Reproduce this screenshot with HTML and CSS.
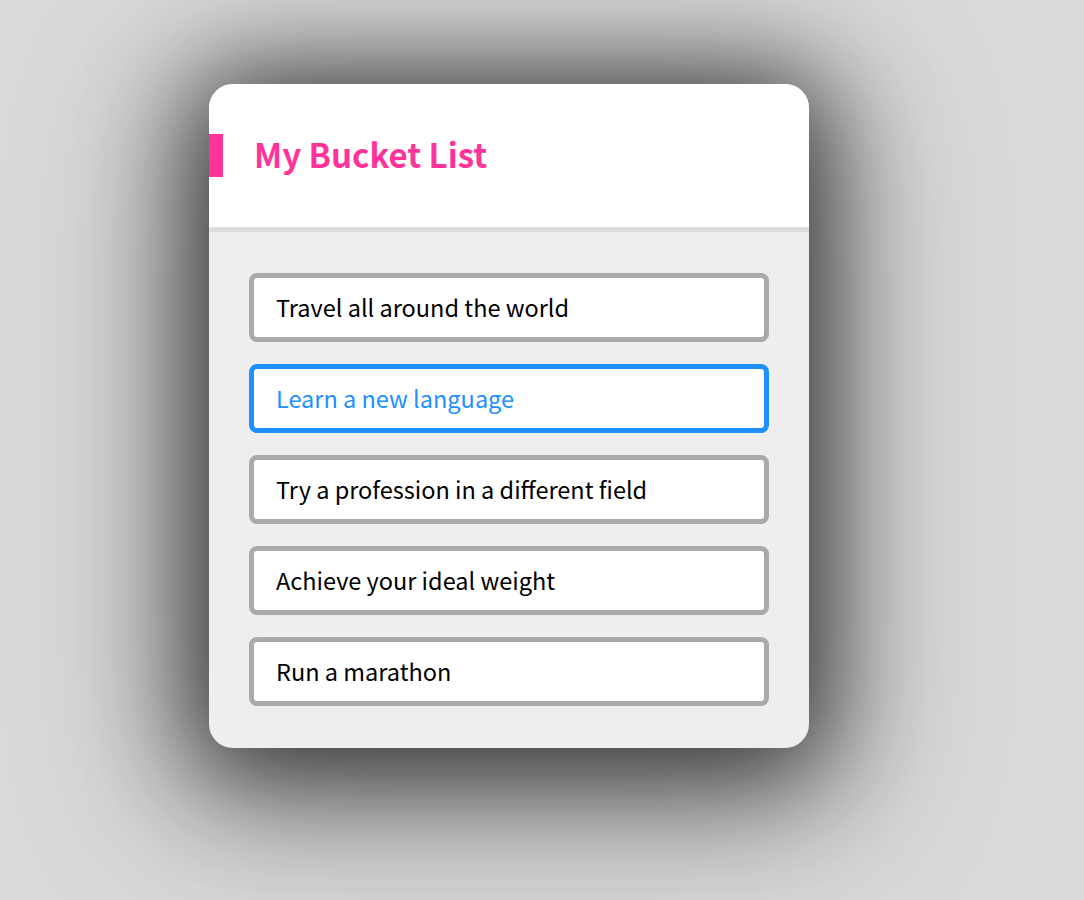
FILE: index.html
```html
<!DOCTYPE html>
<html lang="en">
<head>
  <meta charset="UTF-8" />
  <title>My Bucket List</title>
  <link rel="stylesheet" href="styles.css">
</head>
<body>
  <div class="page">
    <div class="card">
      <div class="card-header">
        <h2>My Bucket List</h2>
      </div>

      <!-- bucket items -->
      <ul class="bucket-list">
        <li class="item">Travel all around the world</li>
        <li class="item active">Learn a new language</li>
        <li class="item">Try a profession in a different field</li>
        <li class="item">Achieve your ideal weight</li>
        <li class="item">Run a marathon</li>
      </ul>
    </div>
  </div>
</body>
</html>
```

FILE: styles.css
```css
html,
body {
  min-height: 100vh;
}

body {
  margin: 0;
  background-color: #d9d9d9;
  font-family: "Noto Sans CJK KR", "Noto Sans", sans-serif;
}

.page {
  padding: 84px 0 0 209px;
}

.card {
  width: 600px;
  border-radius: 24px;
  overflow: hidden;
  background: #eee;
  box-shadow: 0 10px 100px 15px rgba(0, 0, 0, 0.65),
    0 30px 160px 30px rgba(0, 0, 0, 0.35);
}

.card-header {
  height: 148px;
  background: white;
  border-bottom: 5px solid #ddd;
  padding-top: 50px;
  box-sizing: border-box;
}

h2 {
  margin: 0;
  height: 43px;
  line-height: 40px;
  border-left: 14px solid #ff3399;
  padding-left: 31px;
  color: #ff3399;
  font-size: 33px;
  font-weight: bold;
}

.bucket-list {
  list-style: none;
  margin: 0;
  padding: 41px 40px 42px;
  display: flex;
  flex-direction: column;
  gap: 22px;
}

.item {
  height: 59px;
  line-height: 59px;
  padding: 0 22px;
  background: white;
  border: 5px solid #aaa;
  border-radius: 8px;
  font-size: 23.5px;
  color: black;
}

.item.active {
  border-color: #1e90ff;
  color: #1e90ff;
}
```
